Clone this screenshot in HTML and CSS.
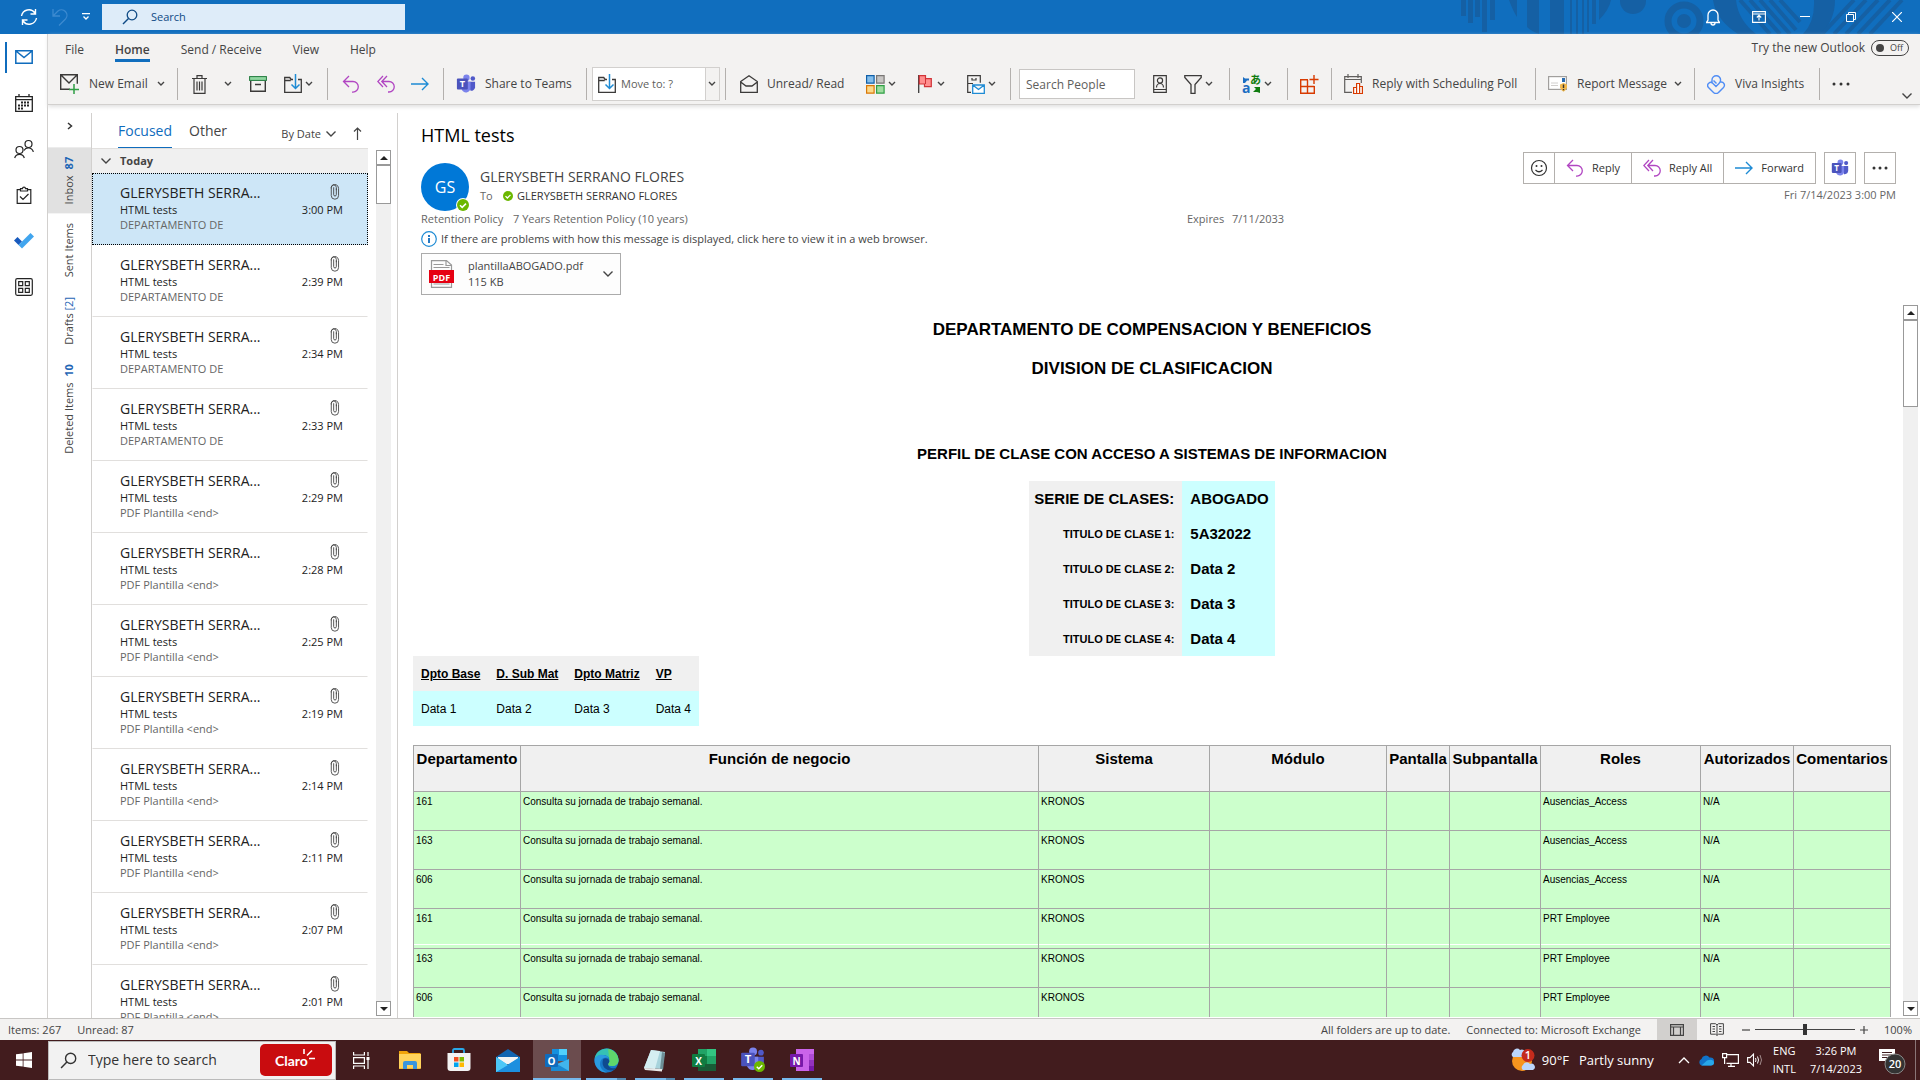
FILE: index.html
```html
<!DOCTYPE html>
<html lang="en">
<head>
<meta charset="utf-8">
<title>Inbox - Outlook</title>
<link rel="stylesheet" href="styles.css">
</head>
<body>
<svg class="defs" aria-hidden="true">
  <symbol id="chev" viewBox="0 0 8 6"><path d="M1 1l3 3 3-3" fill="none" stroke="#444" stroke-width="1.4"/></symbol>
  <symbol id="chev-lg" viewBox="0 0 12 8"><path d="M1.5 1.5L6 6l4.500-4.500" fill="none" stroke="#444" stroke-width="1.400"/></symbol>
  <symbol id="clip" viewBox="0 0 10 18"><path d="M6.500 5v7a1.500 1.500 0 0 1-3 0V4a1.500 1.500 0 0 1 .2-.5M.8 5V4a3.800 3.800 0 0 1 5.700-3Q9 2 9 5v8a4 4 0 0 1-8.200 0V4a2.800 2.800 0 0 1 5.700 0v3" fill="none" stroke="#444" stroke-width="1"/></symbol>
  <symbol id="reply" viewBox="0 0 18 18"><path d="M7 1L1.500 6.500 7 12M1.500 6.500H11a5.300 5.300 0 0 1 0 10.600H10" fill="none" stroke="#b146c2" stroke-width="1.300"/></symbol>
  <symbol id="reply-all" viewBox="0 0 18 18"><path d="M6 1L.8 6.500 6 12M10 1L4.800 6.500 10 12M4.800 6.500H12a5 5 0 0 1 0 10.500h-1" fill="none" stroke="#b146c2" stroke-width="1.300"/></symbol>
  <symbol id="forward" viewBox="0 0 18 18"><path d="M0 9h17M11 3l6 6-6 6" fill="none" stroke="#1e8bd4" stroke-width="1.400"/></symbol>
  <symbol id="folder-move" viewBox="0 0 18 20"><path d="M8 18.300H.7V3.500h5l1.500 2H9M14 5.500h3.300v12.800H8M.7 6.500h6" fill="none" stroke="#3b3a39" stroke-width="1.300"/><path d="M11.500 0v14.500M7.500 10.500l4 4 4-4" fill="none" stroke="#1e8bd4" stroke-width="1.500"/></symbol>
  <symbol id="lens" viewBox="0 0 16 16"><path d="M1 15l5.500-5.500" fill="none" stroke="currentColor" stroke-width="1.400"/><circle cx="10" cy="6" r="4.800" fill="none" stroke="currentColor" stroke-width="1.300"/></symbol>
  <symbol id="teams" viewBox="0 0 22 22"><circle cx="11.500" cy="4" r="3.500" fill="#7b83eb"/><circle cx="18.500" cy="5" r="2.500" fill="#5059c9"/><path d="M13 8.500h8v6a4.500 4.500 0 0 1-5 4z" fill="#5059c9"/><path d="M6 8.500h10v6a5 5 0 0 1-10 1.500z" fill="#7b83eb"/><rect x="1" y="5" width="12" height="12" rx="1" fill="#4b53bc"/><text x="7" y="14.500" text-anchor="middle" class="glyph">T</text></symbol>
  <symbol id="ok" viewBox="0 0 12 12"><circle cx="6" cy="6" r="6" fill="#6bb700"/><path d="M3 6.200l2.200 2.200L9 4.600" fill="none" stroke="#fff" stroke-width="1.500"/></symbol>
</svg>

<header class="titlebar">
  <svg class="art" viewBox="0 0 460 34" width="460" height="34" aria-hidden="true">
    <g fill="#1560a4"><path d="M1 0h5v16H1zM8 0h5v23H8zM15 0h5v17h-5zM22 0h5v32h-5zM30 0h5v20h-5zM49 0h8v17q-4-6-8-17zM67 0h12v34q-8-3-12-7zM90 0h14v34H90zM110 0h2v34h-2zM116 0h2v34h-2zM122 0h2v34h-2zM127 0h2v32h-2zM132 0h4v24h-4zM139 0h12q-2 10-12 20z"/><circle cx="173" cy="1" r="13"/>
    <path d="M253 0h23q2 20 20 34h-18q-22-14-25-34zM354 0h21q0 20-14 34h-18q12-12 11-34z"/></g>
    <circle cx="224" cy="21" r="16" fill="none" stroke="#1560a4" stroke-width="7"/><circle cx="224" cy="21" r="7" fill="#1560a4"/>
    <path d="M280 0l30 34M290 0l30 34M300 0l30 34M310 0l26 30M320 0l20 22M362 34l32-34M374 34l32-34M386 34l32-34M398 34l32-34M410 34l32-34" stroke="#1560a4" stroke-width="4"/>
  </svg>
  <div class="quick">
    <button aria-label="Send and receive"><svg width="18" height="18" viewBox="0 0 18 18"><path d="M1.500 8A7.500 7.500 0 0 1 15 5M16.500 10A7.500 7.500 0 0 1 3 13M15.500 1v5h-5M2.500 17v-5h5" fill="none" stroke="#fff" stroke-width="1.400"/></svg></button>
    <button aria-label="Undo"><svg width="16" height="18" viewBox="0 0 16 18"><path d="M1 1v7h7M1 8l5-5a5.500 5.500 0 0 1 7.500 8L7 17.500" fill="none" stroke="#3c8ad0" stroke-width="1.300"/></svg></button>
    <button aria-label="Customize toolbar"><svg width="8" height="8" viewBox="0 0 8 8"><path d="M0 .7h8M1.500 3.500L4 6l2.500-2.500" fill="none" stroke="#fff" stroke-width="1.300"/></svg></button>
  </div>
  <label class="searchbox"><svg width="16" height="16"><use href="#lens"/></svg><input type="text" placeholder="Search" aria-label="Search"></label>
  <div class="winctl">
    <button aria-label="Notifications"><svg width="14" height="18" viewBox="0 0 14 18"><path d="M.5 14.500h13L12 12V7A5 5 0 0 0 2 7v5zM5 15a2 2 0 0 0 4 0" fill="none" stroke="#fff" stroke-width="1.300"/></svg></button>
    <button aria-label="Ribbon display"><svg width="14" height="12" viewBox="0 0 14 12"><path d="M.6.600h12.800v10.800H.6zM.6 3h12.800M7 9.500v-5M4.800 6.500L7 4.300l2.200 2.200" fill="none" stroke="#fff" stroke-width="1.100"/></svg></button>
    <button aria-label="Minimize"><svg width="10" height="10" viewBox="0 0 10 10"><path d="M0 4.500h10" stroke="#fff"/></svg></button>
    <button aria-label="Restore"><svg width="10" height="10" viewBox="0 0 10 10"><path d="M.5 2.500h7v7h-7zM2.500 2V.5h7v7H8" fill="none" stroke="#fff"/></svg></button>
    <button aria-label="Close"><svg width="10" height="10" viewBox="0 0 10 10"><path d="M0 0l10 10M10 0L0 10" stroke="#fff" stroke-width="1.200"/></svg></button>
  </div>
</header>

<div class="app">
  <nav class="rail" aria-label="Apps">
    <a href="#" class="on" aria-label="Mail"><svg width="18" height="14" viewBox="0 0 18 14"><path d="M.8.800h16.400v12.400H.8zM1 1l8 6.500L17 1" fill="none" stroke="#0f6cbd" stroke-width="1.500"/></svg></a>
    <a href="#" aria-label="Calendar"><svg width="18" height="18" viewBox="0 0 18 18"><path d="M.7 2.700h16.600v14.600H.7zM.7 5.700h16.600M4 0v3M14 0v3" fill="none" stroke="#242424" stroke-width="1.300"/><path d="M6 8.500h9M3 11.500h12M3 14.500h6" stroke="#242424" stroke-width="2" stroke-dasharray="2 1"/></svg></a>
    <a href="#" aria-label="People"><svg width="20" height="20" viewBox="0 0 20 20"><g fill="none" stroke="#242424" stroke-width="1.200"><circle cx="14.500" cy="5" r="3.500"/><circle cx="5.500" cy="11" r="3.500"/><path d="M.7 19a5 5 0 0 1 9.600 0M10 11.500a5 5 0 0 1 9.300 1.500"/></g></svg></a>
    <a href="#" aria-label="Tasks"><svg width="16" height="18" viewBox="0 0 16 18"><path d="M4 3.700H1.200v13.600h13.600V3.700H12M4.500 5V2.700h2a1.500 1.500 0 0 1 3 0h2V5zM4 10.500l3 3 5.500-5.500" fill="none" stroke="#242424" stroke-width="1.200"/></svg></a>
    <a href="#" aria-label="To Do"><svg width="20" height="16" viewBox="0 0 20 16"><path d="M0 7.500l3.500-3.500 4.500 4.500-3.500 3.500z" fill="#185abd"/><path d="M4.500 12L16.500 0 20 3.500 8 15.500z" fill="#41a5ee"/></svg></a>
    <a href="#" aria-label="More apps"><svg width="18" height="18" viewBox="0 0 18 18"><g fill="none" stroke="#242424" stroke-width="1.200"><rect x=".7" y=".7" width="16.600" height="16.600" rx="1.500"/><path d="M3.700 3.700h4v4h-4zM10.300 3.700h4v4h-4zM3.700 10.300h4v4h-4zM10.300 10.300h4v4h-4z"/></g></svg></a>
  </nav>

  <div class="workspace">
    <div class="ribbon">
      <div class="tabs">
        <a href="#">File</a><a href="#" class="on">Home</a><a href="#">Send / Receive</a><a href="#">View</a><a href="#">Help</a>
        <span class="try"><label for="newol">Try the new Outlook</label><span class="toggle"><input type="checkbox" id="newol">Off</span></span>
      </div>
      <div class="commands">
        <div class="grp"><button><svg width="20" height="21" viewBox="0 0 20 21"><path d="M10 15.300H.7V.7h16.600v9M1 1l8 8 8-8" fill="none" stroke="#3b3a39" stroke-width="1.400"/><path d="M14 10v10M9 15.500h10" stroke="#2f9e44" stroke-width="1.500"/></svg>New Email</button><button aria-label="More"><svg width="8" height="6"><use href="#chev"/></svg></button></div>
        <div class="grp icons"><button aria-label="Delete"><svg width="15" height="19" viewBox="0 0 15 19"><path d="M0 3.500h15M2 3.500v14.800h11V3.500M5 3V.7h5V3M5 6.500v9M7.500 6.500v9M10 6.500v9" fill="none" stroke="#3b3a39" stroke-width="1.200"/></svg></button><button aria-label="More"><svg width="8" height="6"><use href="#chev"/></svg></button>
          <button aria-label="Archive"><svg width="18" height="16" viewBox="0 0 18 16"><path d="M1.700 5v10.300h14.600V5M6 8.500h6" fill="none" stroke="#3b3a39" stroke-width="1.400"/><rect x=".6" y=".6" width="16.800" height="3.800" fill="#8fd6a0" stroke="#217a3c"/></svg></button>
          <button class="tight" aria-label="Move"><svg width="18" height="20"><use href="#folder-move"/></svg><svg width="8" height="6"><use href="#chev"/></svg></button></div>
        <div class="grp icons"><button aria-label="Reply"><svg width="18" height="18"><use href="#reply"/></svg></button><button aria-label="Reply all"><svg width="18" height="18"><use href="#reply-all"/></svg></button><button aria-label="Forward"><svg width="18" height="18"><use href="#forward"/></svg></button></div>
        <div class="grp"><button><svg width="20" height="20"><use href="#teams"/></svg>Share to Teams</button></div>
        <div class="grp snug"><div class="combo"><svg width="18" height="20"><use href="#folder-move"/></svg><select aria-label="Quick steps"><option>Move to: ?</option></select><span class="drop"><svg width="8" height="6"><use href="#chev"/></svg></span></div></div>
        <div class="grp icons"><button><svg width="18" height="18" viewBox="0 0 18 18"><path d="M.7 6.500L9 .8l8.300 5.700v10.800H.7zM.7 7L6 11h6l5.300-4" fill="none" stroke="#3b3a39" stroke-width="1.300"/></svg>Unread/ Read</button>
          <button class="tight" aria-label="Categorize"><svg width="19" height="19" viewBox="0 0 19 19"><g stroke-width="1.200"><path d="M.6.600h7.500v7.500H.6z" fill="#83beec" stroke="#0f5fa8"/><path d="M10.600.6h7.500v7.500h-7.500z" fill="#c8c6c4" stroke="#797775"/><path d="M.6 10.600h7.500v7.500H.6z" fill="#fbd98a" stroke="#d97706"/><path d="M10.600 10.600h7.500v7.500h-7.500z" fill="#9fdc9f" stroke="#2f9e44"/></g></svg><svg width="8" height="6"><use href="#chev"/></svg></button>
          <button class="wide" aria-label="Follow up"><svg width="14" height="18" viewBox="0 0 14 18"><path d="M.7 0v18" stroke="#3b3a39" stroke-width="1.300"/><path d="M1.300.7H7.500v3h5.800v8H6.500V9H1.300z" fill="#ff8f8f" stroke="#d13438" stroke-width="1.200"/><path d="M7.500 3.500V9" stroke="#d13438"/></svg><svg width="8" height="6"><use href="#chev"/></svg></button>
          <button class="tight" aria-label="Rules"><svg width="18" height="19" viewBox="0 0 18 19"><path d="M4 17.300H.7V.7h12.600v7M.7 8.500H6M5 3v2h4V3" fill="none" stroke="#3b3a39" stroke-width="1.200"/><path d="M5.700 10h11.600v8.300H5.700zM6 10.300l5.500 4.200 5.500-4.200" fill="#fff" stroke="#1e8bd4" stroke-width="1.300"/></svg><svg width="8" height="6"><use href="#chev"/></svg></button></div>
        <div class="grp people"><input type="text" placeholder="Search People" aria-label="Search People"><button aria-label="Address book"><svg width="14" height="18" viewBox="0 0 14 18"><path d="M.7.700h12.600v16.600H.7zM.7 14.500h12.600M3.500 12.500a3.500 4 0 0 1 7 0" fill="none" stroke="#3b3a39" stroke-width="1.200"/><circle cx="7" cy="5.500" r="2.600" fill="none" stroke="#3b3a39" stroke-width="1.200"/></svg></button>
          <button class="tight" aria-label="Filter"><svg width="18" height="19" viewBox="0 0 18 19"><path d="M.8.700h16.400v1.800L11 9.500v8.800H7V9.500L.8 2.500z" fill="none" stroke="#3b3a39" stroke-width="1.300"/></svg><svg width="8" height="6"><use href="#chev"/></svg></button></div>
        <div class="grp"><button class="tight" aria-label="Translate"><svg class="open" width="19" height="19" viewBox="0 0 19 19"><path d="M1 2l2 1.500h4v2H5L3 8 1 8z" fill="#1b6ec2"/><path d="M18 18v-6h-6l2 2-3 3h4z" fill="#107c10"/><text x="0" y="18" class="tr-a">a</text><text x="8" y="9" class="tr-b">あ</text></svg><svg width="8" height="6"><use href="#chev"/></svg></button></div>
        <div class="grp"><button aria-label="Get add-ins"><svg width="19" height="19" viewBox="0 0 19 19"><path d="M8 4.700H.7v13.600h13.600V11M7.500 5v13M.7 11.500h13.600M14 0v9M9.500 4.500h9" fill="none" stroke="#d83b01" stroke-width="1.400"/></svg></button></div>
        <div class="grp"><button><svg width="19" height="20" viewBox="0 0 19 20"><path d="M8 18.300H.7V2.700h16.600V9M.7 5.500h16.600M4 0v4M14 0v4" fill="none" stroke="#605e5c" stroke-width="1.200"/><path d="M9.600 13.500h3v6h-3zM12.600 9.500h3v10h-3zM15.600 12.500h2.800v7h-2.800z" fill="#fff" stroke="#d83b01" stroke-width="1.200"/></svg>Reply with Scheduling Poll</button></div>
        <div class="grp"><button><svg width="20" height="16" viewBox="0 0 20 16"><rect x=".6" y=".6" width="17.800" height="12.800" fill="#fff" stroke="#a19f9d" stroke-width="1.200"/><path d="M3 7h7M3 9.500h7" stroke="#d2d0ce"/><path d="M14 2h3v4h-3z" fill="#2b6cb0"/><path d="M12 8.500l3.500-1.500 3.500 1.500v3q-1 3-3.500 4.200Q13 14.500 12 11.500z" fill="#f2b84b"/><path d="M15.500 8.500v3.500M15.500 13v1.200" stroke="#333" stroke-width="1.400"/></svg>Report Message</button><svg width="8" height="6"><use href="#chev"/></svg></div>
        <div class="grp"><button><svg width="19" height="19" viewBox="0 0 19 19"><g fill="none" stroke="#4f8df5" stroke-width="1.400"><path d="M5 8.500V5a4.300 4.300 0 0 1 8.600 0c0 1.600-.6 2.500-1.600 3.500L9 11.500 6 8.500A3 3 0 0 0 1.500 12.500L6.500 17.500a3.500 3.500 0 0 0 5 0l5-5a3.300 3.300 0 0 0-3-5.500"/><path d="M6.500 5.500l3 3"/></g></svg>Viva Insights</button></div>
        <div class="grp last"><button aria-label="More commands"><svg width="18" height="4" viewBox="0 0 18 4"><path d="M2 2h.01M9 2h.01M16 2h.01" stroke="#333" stroke-width="3" stroke-linecap="round"/></svg></button><button class="collapse" aria-label="Collapse ribbon"><svg width="12" height="8"><use href="#chev-lg"/></svg></button></div>
      </div>
    </div>

    <div class="panes">
      <nav class="folders" aria-label="Folders">
        <button class="expand" aria-label="Expand folders"><svg width="6" height="8" viewBox="0 0 6 8"><path d="M1 1l3.500 3L1 7" fill="none" stroke="#333" stroke-width="1.500"/></svg></button>
        <a href="#" class="on">Inbox <b>87</b></a><a href="#">Sent Items</a><a href="#">Drafts <i>[2]</i></a><a href="#">Deleted Items <b>10</b></a>
      </nav>

      <section class="list">
        <div class="listhead"><a href="#" class="on">Focused</a><a href="#">Other</a><button class="sort">By Date <svg width="12" height="8"><use href="#chev-lg"/></svg></button><button aria-label="Reverse order"><svg width="9" height="13" viewBox="0 0 9 13"><path d="M4.500 13V1M1 4.500L4.500 1 8 4.500" fill="none" stroke="#444" stroke-width="1.200"/></svg></button></div>
        <div class="listbody">
          <div class="mails">
            <div class="day"><svg width="12" height="8"><use href="#chev-lg"/></svg>Today</div>
            <article class="mail sel"><h3>GLERYSBETH SERRA...</h3><svg class="clip"><use href="#clip"/></svg><p>HTML tests</p><time>3:00 PM</time><small>DEPARTAMENTO DE</small></article>
            <article class="mail"><h3>GLERYSBETH SERRA...</h3><svg class="clip"><use href="#clip"/></svg><p>HTML tests</p><time>2:39 PM</time><small>DEPARTAMENTO DE</small></article>
            <article class="mail"><h3>GLERYSBETH SERRA...</h3><svg class="clip"><use href="#clip"/></svg><p>HTML tests</p><time>2:34 PM</time><small>DEPARTAMENTO DE</small></article>
            <article class="mail"><h3>GLERYSBETH SERRA...</h3><svg class="clip"><use href="#clip"/></svg><p>HTML tests</p><time>2:33 PM</time><small>DEPARTAMENTO DE</small></article>
            <article class="mail"><h3>GLERYSBETH SERRA...</h3><svg class="clip"><use href="#clip"/></svg><p>HTML tests</p><time>2:29 PM</time><small>PDF Plantilla &lt;end&gt;</small></article>
            <article class="mail"><h3>GLERYSBETH SERRA...</h3><svg class="clip"><use href="#clip"/></svg><p>HTML tests</p><time>2:28 PM</time><small>PDF Plantilla &lt;end&gt;</small></article>
            <article class="mail"><h3>GLERYSBETH SERRA...</h3><svg class="clip"><use href="#clip"/></svg><p>HTML tests</p><time>2:25 PM</time><small>PDF Plantilla &lt;end&gt;</small></article>
            <article class="mail"><h3>GLERYSBETH SERRA...</h3><svg class="clip"><use href="#clip"/></svg><p>HTML tests</p><time>2:19 PM</time><small>PDF Plantilla &lt;end&gt;</small></article>
            <article class="mail"><h3>GLERYSBETH SERRA...</h3><svg class="clip"><use href="#clip"/></svg><p>HTML tests</p><time>2:14 PM</time><small>PDF Plantilla &lt;end&gt;</small></article>
            <article class="mail"><h3>GLERYSBETH SERRA...</h3><svg class="clip"><use href="#clip"/></svg><p>HTML tests</p><time>2:11 PM</time><small>PDF Plantilla &lt;end&gt;</small></article>
            <article class="mail"><h3>GLERYSBETH SERRA...</h3><svg class="clip"><use href="#clip"/></svg><p>HTML tests</p><time>2:07 PM</time><small>PDF Plantilla &lt;end&gt;</small></article>
            <article class="mail"><h3>GLERYSBETH SERRA...</h3><svg class="clip"><use href="#clip"/></svg><p>HTML tests</p><time>2:01 PM</time><small>PDF Plantilla &lt;end&gt;</small></article>
          </div>
          <div class="scroll"><span class="arrow up"></span><span class="thumb short"></span><span class="arrow down"></span></div>
        </div>
      </section>

      <main class="reading">
        <div class="msghead">
          <h1>HTML tests</h1>
          <div class="from">
            <span class="avatar">GS<svg width="14" height="14" viewBox="-1 -1 14 14"><circle cx="6" cy="6" r="7" fill="#fff"/><use href="#ok" width="12" height="12"/></svg></span>
            <div class="who"><h2>GLERYSBETH SERRANO FLORES</h2><p><span>To</span><svg width="10" height="10"><use href="#ok"/></svg>GLERYSBETH SERRANO FLORES</p></div>
            <div class="actions">
              <div class="btns">
                <div class="joined"><button aria-label="React"><svg width="18" height="18" viewBox="0 0 18 18"><g fill="none" stroke="#333" stroke-width="1.200"><circle cx="9" cy="9" r="7.500"/><path d="M5.500 11q3.500 3.500 7 0"/></g><circle cx="6.500" cy="7" r="1" fill="#333"/><circle cx="11.500" cy="7" r="1" fill="#333"/></svg></button><button><svg width="18" height="18"><use href="#reply"/></svg>Reply</button><button><svg width="18" height="18"><use href="#reply-all"/></svg>Reply All</button><button><svg width="18" height="18"><use href="#forward"/></svg>Forward</button></div>
                <button class="solo" aria-label="Share to Teams"><svg width="18" height="18"><use href="#teams"/></svg></button>
                <button class="solo" aria-label="More actions"><svg width="18" height="4" viewBox="0 0 18 4"><path d="M3 2h.01M9 2h.01M15 2h.01" stroke="#333" stroke-width="3" stroke-linecap="round"/></svg></button>
              </div>
              <time>Fri 7/14/2023 3:00 PM</time>
            </div>
          </div>
          <div class="policy"><span>Retention Policy</span><span>7 Years Retention Policy (10 years)</span><span class="exp">Expires</span><span>7/11/2033</span></div>
          <div class="info"><svg width="16" height="16" viewBox="0 0 16 16"><circle cx="8" cy="8" r="7.300" fill="#fff" stroke="#1e8bd4" stroke-width="1.200"/><path d="M8 4v2M8 7v5" stroke="#0f6cbd" stroke-width="1.800"/></svg><span>If there are problems with how this message is displayed, click here to view it in a web browser.</span></div>
          <button class="attach"><svg width="25" height="28" viewBox="0 0 25 28"><path d="M2.500.600h15L22.500 5v22.400h-20zM17 .6V5.500h5.500M4.500 4.500h10M4.500 7.500h16M4.500 24h16" fill="none" stroke="#999" stroke-width="1.200"/><rect y="10" width="25" height="13" fill="#e60012"/><text x="12.500" y="20.500" text-anchor="middle" class="pdf">PDF</text></svg><span>plantillaABOGADO.pdf<em>115 KB</em></span><svg width="12" height="8"><use href="#chev-lg"/></svg></button>
        </div>
        <div class="msgbody">
          <div class="doc">
            <h4>DEPARTAMENTO DE COMPENSACION Y BENEFICIOS</h4>
            <h4>DIVISION DE CLASIFICACION</h4>
            <h5>PERFIL DE CLASE CON ACCESO A SISTEMAS DE INFORMACION</h5>
            <table class="clases">
              <tr class="lead"><th>SERIE DE CLASES:</th><td>ABOGADO</td></tr>
              <tr><th>TITULO DE CLASE 1:</th><td>5A32022</td></tr>
              <tr><th>TITULO DE CLASE 2:</th><td>Data 2</td></tr>
              <tr><th>TITULO DE CLASE 3:</th><td>Data 3</td></tr>
              <tr><th>TITULO DE CLASE 4:</th><td>Data 4</td></tr>
            </table>
            <table class="dptos">
              <tr><th>Dpto Base</th><th>D. Sub Mat</th><th>Dpto Matriz</th><th>VP</th></tr>
              <tr><td>Data 1</td><td>Data 2</td><td>Data 3</td><td>Data 4</td></tr>
            </table>
            <table class="accesos">
              <colgroup><col class="c-dep"><col><col class="c-sis"><col class="c-mod"><col class="c-pan"><col class="c-sub"><col class="c-rol"><col class="c-aut"><col class="c-com"></colgroup>
              <tr><th>Departamento</th><th>Función de negocio</th><th>Sistema</th><th>Módulo</th><th>Pantalla</th><th>Subpantalla</th><th>Roles</th><th>Autorizados</th><th>Comentarios</th></tr>
              <tr><td>161</td><td>Consulta su jornada de trabajo semanal.</td><td>KRONOS</td><td></td><td></td><td></td><td>Ausencias_Access</td><td>N/A</td><td></td></tr>
              <tr><td>163</td><td>Consulta su jornada de trabajo semanal.</td><td>KRONOS</td><td></td><td></td><td></td><td>Ausencias_Access</td><td>N/A</td><td></td></tr>
              <tr><td>606</td><td>Consulta su jornada de trabajo semanal.</td><td>KRONOS</td><td></td><td></td><td></td><td>Ausencias_Access</td><td>N/A</td><td></td></tr>
              <tr class="page-end"><td>161</td><td>Consulta su jornada de trabajo semanal.</td><td>KRONOS</td><td></td><td></td><td></td><td>PRT Employee</td><td>N/A</td><td></td></tr>
              <tr><td>163</td><td>Consulta su jornada de trabajo semanal.</td><td>KRONOS</td><td></td><td></td><td></td><td>PRT Employee</td><td>N/A</td><td></td></tr>
              <tr><td>606</td><td>Consulta su jornada de trabajo semanal.</td><td>KRONOS</td><td></td><td></td><td></td><td>PRT Employee</td><td>N/A</td><td></td></tr>
            </table>
          </div>
          <div class="scroll"><span class="arrow up"></span><span class="thumb long"></span><span class="arrow down"></span></div>
        </div>
      </main>
    </div>
  </div>
</div>

<footer class="status">
  <span>Items: 267</span><span>Unread: 87</span>
  <span class="push">All folders are up to date.</span><span>Connected to: Microsoft Exchange</span>
  <div class="views"><button class="on" aria-label="Normal view"><svg width="14" height="12" viewBox="0 0 14 12"><path d="M.6.600h12.800v10.800H.6zM.6 3h12.800M3.500 3v8.500M10.500 3v8.500" fill="none" stroke="#444" stroke-width="1.200"/></svg></button><button aria-label="Reading view"><svg width="14" height="13" viewBox="0 0 14 13"><path d="M7 2L5.500.7H.6v10.500h4.900L7 12.500l1.500-1.300h4.900V.7H8.500zM7 2v10M2.500 3.500h2.500M2.500 6h2.500M2.500 8.500h2.500M9 3.500h2.500M9 6h2.500M9 8.500h2.500" fill="none" stroke="#444"/></svg></button>
    <div class="zoom"><button aria-label="Zoom out"><svg width="8" height="8" viewBox="0 0 8 8"><path d="M0 4h8" stroke="#444" stroke-width="1.200"/></svg></button><input type="range" min="0" max="100" value="50" aria-label="Zoom"><button aria-label="Zoom in"><svg width="8" height="8" viewBox="0 0 8 8"><path d="M0 4h8M4 0v8" stroke="#444" stroke-width="1.200"/></svg></button></div></div>
  <span>100%</span>
</footer>

<footer class="taskbar">
  <button class="start" aria-label="Start"><svg width="16" height="16" viewBox="0 0 16 16"><path d="M0 2.300L6.700 1.400V7.600H0zM7.500 1.300L16 0v7.600H7.500zM0 8.400h6.700v6.200L0 13.700zM7.500 8.400H16V16l-8.500-1.300z" fill="#fff"/></svg></button>
  <div class="tsearch"><svg width="17" height="17"><use href="#lens"/></svg><input type="text" placeholder="Type here to search" aria-label="Type here to search"><span class="claro">Claro<svg width="14" height="14" viewBox="0 0 14 14"><path d="M2 5V0M5 6.500l5-5M7 9.500h6" stroke="#fff" stroke-width="1.600"/></svg></span></div>
  <div class="apps">
    <button aria-label="Task view"><svg width="17" height="17" viewBox="0 0 17 17"><path d="M.6 0v3h10.800V0M.6 17v-3h10.800v3M.6 5.600h10.800v5.800H.6zM15 0v4M15 8v9" fill="none" stroke="#fff" stroke-width="1.200"/><rect x="13.500" y="5" width="3" height="3" fill="#fff"/></svg></button>
    <button aria-label="File Explorer"><svg width="22" height="20" viewBox="0 0 22 20"><path d="M0 1h8l2 2h11.500V19H0z" fill="#f0a30a"/><path d="M0 4h22v14.500H0z" fill="#ffd35c"/><path d="M4 19v-6q0-2 2-2h10q2 0 2 2v6h-4v-4H8v4z" fill="#3a96dd"/></svg></button>
    <button aria-label="Microsoft Store"><svg width="24" height="24" viewBox="0 0 24 24"><path d="M6 6V2.500Q6 1 7.500 1h8Q17 1 17 2.500V6" fill="none" stroke="#2aa8e8" stroke-width="1.800"/><path d="M.5 5h23v15q0 3-3 3h-17q-3 0-3-3z" fill="#f3f3f3"/><path d="M7 9h4.500v4.500H7z" fill="#f25022"/><path d="M12.500 9H17v4.500h-4.500z" fill="#7fba00"/><path d="M7 14.500h4.500V19H7z" fill="#00a4ef"/><path d="M12.500 14.500H17V19h-4.500z" fill="#ffb900"/></svg></button>
    <button aria-label="Mail"><svg width="24" height="23" viewBox="0 0 24 23"><path d="M0 8l12-8 12 8v4H0z" fill="#1264b0"/><path d="M2 8h20v7H2z" fill="#f3f3f3"/><path d="M0 8l12 8 12-8v15H0z" fill="#35b5f0"/><path d="M24 8v15H0z" fill="#1c8fdf"/><path d="M0 8l12 8L0 23z" fill="#4cc7f7"/></svg></button>
    <button class="run active" aria-label="Outlook"><svg width="25" height="23" viewBox="0 0 25 23"><path d="M7 0h15v12H7z" fill="#1490df"/><path d="M14 0h8v6h-8z" fill="#50d0fc"/><path d="M6 11l9 5 9-6v12H6z" fill="#1a8ad4"/><path d="M24 10v12L12 15z" fill="#41b5ee"/><rect y="5" width="13" height="13" rx="1" fill="#0f6cbd"/><text x="6.500" y="15.500" text-anchor="middle" class="glyph">O</text></svg></button>
    <button class="run multi" aria-label="Edge"><svg width="25" height="25" viewBox="0 0 25 25"><circle cx="12.500" cy="12.500" r="12" fill="#1778c8"/><path d="M.6 11A12 12 0 0 1 24.500 12c0 4-3 6-6.500 6-3 0-4-1-4-2 0-.8 1.500-1.500 1.500-4 0-3-3-5-6.500-5-4 0-7 1.500-8.400 4z" fill="#35c1b5"/><path d="M14 1a12 12 0 0 1 10.500 11c0 4-3 6-6.500 6-3 0-4-1-4-2 0-.8 1.500-1.500 1.500-4z" fill="#5fd66b"/><path d="M.6 11C3 7 6 6.500 9 7c4 .5 6.500 3 6.500 5q0-2.500-3.500-2.500c-4 0-6 3-6 6.500 0 4 3 7 7 8.400A12 12 0 0 1 .6 11z" fill="#2a9be0"/><path d="M9 11.500c-2 7 3 11 8 11q3 0 6-3c-5 2-9 0-9-3.500q1-1 1.500-3-1-3-4-2.800-1.500 0-2.500 1.300z" fill="#0f4a90"/></svg></button>
    <button class="run multi" aria-label="Notepad"><svg width="24" height="23" viewBox="0 0 24 23"><path d="M8 1l14 2-3 17L1 19z" fill="#a7d3dc"/><path d="M8 1l9 1-5 18L1 19z" fill="#d5eef2"/><path d="M19 3l3 1-2 17-3-1z" fill="#6d8f97"/><path d="M1 19l18 1v2.500L2 21z" fill="#e8e8e8"/></svg></button>
    <button class="run" aria-label="Excel"><svg width="25" height="23" viewBox="0 0 25 23"><path d="M6 0h18v22H6z" fill="#21a366"/><path d="M15 0h9v7h-9z" fill="#33c481"/><path d="M6 7h9v8H6z" fill="#107c41"/><path d="M6 15h18v7H6z" fill="#185c37"/><rect y="5" width="13" height="13" rx="1" fill="#107c41"/><text x="6.500" y="15.500" text-anchor="middle" class="glyph">X</text></svg></button>
    <button class="run" aria-label="Teams"><svg width="26" height="26" viewBox="0 0 26 26"><use href="#teams" width="25" height="25"/><use href="#ok" x="14" y="14" width="11" height="11"/></svg></button>
    <button class="run" aria-label="OneNote"><svg width="25" height="23" viewBox="0 0 25 23"><path d="M6 0h18v22H6z" fill="#ca64ea"/><path d="M19 5h5v6h-5z" fill="#ae4bd5"/><path d="M19 11h5v6h-5z" fill="#9332bf"/><path d="M19 17h5v5h-5z" fill="#7719aa"/><rect y="5" width="13" height="13" rx="1" fill="#7719aa"/><text x="6.500" y="15.500" text-anchor="middle" class="glyph">N</text></svg></button>
  </div>
  <button class="weather"><svg width="25" height="24" viewBox="0 0 25 24"><circle cx="12" cy="13" r="10" fill="#f7941e"/><path d="M3 9a3 3 0 0 1 0-5 4 4 0 0 1 7-2 3.500 3.500 0 0 1 3 7zM13 22a3 3 0 0 1 0-5 4 4 0 0 1 7-1 3 3 0 0 1 3 6z" fill="#bcd6fb"/><circle cx="18" cy="7.500" r="6.500" fill="#c42b1c"/><text x="18" y="11" text-anchor="middle" class="count">1</text></svg>90°F<span>Partly sunny</span></button>
  <div class="tray">
    <svg width="12" height="8" viewBox="0 0 12 8"><path d="M1 7l5-5 5 5" fill="none" stroke="#fff" stroke-width="1.300"/></svg>
    <svg width="16" height="11" viewBox="0 0 16 11"><path d="M3.500 10.500a3.500 3.500 0 0 1 0-6.500 4.500 4.500 0 0 1 8-1.500 4 4 0 0 1 1.500 8z" fill="#1173c9"/><path d="M3.500 10.500L9 5.500q6-2 7 2 0 3-3 3z" fill="#28a8ea"/></svg>
    <svg width="17" height="14" viewBox="0 0 17 14"><path d="M4.500 1.600h11.900v8.800H4.500M9 10.500v3M6 13.400h7M.6.600h4v4h-4zM2.600 4.600V11" fill="none" stroke="#fff" stroke-width="1.200"/></svg>
    <svg width="16" height="14" viewBox="0 0 16 14"><path d="M.6 4.600H3l3.500-3.500v11.800L3 9.400H.6z" fill="none" stroke="#fff" stroke-width="1.100"/><path d="M8.500 5q1 2 0 4M10.500 3.500q2 3.500 0 7" fill="none" stroke="#fff"/><path d="M13 2q3 5 0 10" fill="none" stroke="#a08a8a"/></svg>
  </div>
  <div class="clock">ENG<br>INTL</div>
  <div class="clock">3:26 PM<br>7/14/2023</div>
  <button class="notes" aria-label="Notifications"><svg width="32" height="28" viewBox="0 0 32 28"><path d="M1 3h16v12h-4l-3 3v-3H1z" fill="#fff"/><path d="M4 6.500h10M4 9h10M4 11.500h7" stroke="#3f1c1e"/><circle cx="17" cy="18" r="10" fill="#333" stroke="#888"/><text x="17" y="22" text-anchor="middle" class="count">20</text></svg></button>
</footer>
</body>
</html>
```
FILE: styles.css
```css
* { box-sizing: border-box; }
body {
  margin: 0;
  height: 100vh;
  display: flex;
  flex-direction: column;
  overflow: hidden;
  background: #fff;
  color: #444;
  font: 12px/16px "Open Sans", "Noto Sans", sans-serif;
}
h1, h2, h3, h4, h5, p { margin: 0; font-weight: 400; }
a { color: inherit; text-decoration: none; }
svg { flex: none; display: block; }
button, input, select {
  font: inherit;
  color: inherit;
  background: none;
  border: 0;
  padding: 0;
  border-radius: 0;
  outline: 0;
}
button { display: flex; align-items: center; }
.defs { display: none; }
.open { overflow: visible; }
.glyph { font: 700 10px "Open Sans", sans-serif; fill: #fff; }
.tr-a { font: 700 14px "Open Sans", sans-serif; fill: #1b6ec2; }
.tr-b { font: 700 11px "Noto Sans CJK JP", sans-serif; fill: #107c10; }

/* Title bar */
.titlebar {
  position: relative;
  flex: none;
  height: 34px;
  display: flex;
  align-items: center;
  background: #106ebe;
}
.art { position: absolute; right: 0; top: 0; }
.quick { width: 102px; display: flex; align-items: center; justify-content: space-between; padding: 0 12px 0 20px; }
.searchbox {
  display: flex;
  align-items: center;
  gap: 13px;
  width: 303px;
  height: 26px;
  padding-left: 20px;
  background: #deecf9;
  color: #0f4a85;
  font-size: 11px;
}
.searchbox input { flex: 1; min-width: 0; }
::placeholder { color: inherit; opacity: 1; }
.winctl { position: relative; margin-left: auto; display: flex; }
.winctl button { width: 46px; height: 34px; justify-content: center; }

/* App rail */
.app { flex: 1; min-height: 0; display: flex; }
.rail { flex: none; width: 48px; border-right: 1px solid #d2d0ce; display: flex; flex-direction: column; }
.rail a { height: 46px; display: flex; align-items: center; justify-content: center; }
.rail .on { background: linear-gradient(#0f6cbd, #0f6cbd) 5px center / 2px 31px no-repeat; }

/* Ribbon */
.workspace { flex: 1; min-width: 0; display: flex; flex-direction: column; }
.ribbon { position: relative; flex: none; height: 71px; background: #f3f2f1; border-bottom: 1px solid #d2d0ce; box-shadow: 0 2px 4px #e1e1e1; }
.tabs { display: flex; gap: 31px; height: 32px; padding: 4px 11px 0 17px; }
.tabs > a { padding-top: 4px; height: 24px; }
.tabs .on { font-weight: 600; border-bottom: 3px solid #106ebe; }
.try { margin-left: auto; display: flex; align-items: center; gap: 6px; height: 20px; }
.toggle { display: flex; align-items: center; gap: 6px; width: 38px; height: 16px; padding-left: 4px; border: 1px solid #444; border-radius: 8px; font-size: 9px; }
.toggle input { appearance: none; width: 8px; height: 8px; margin: 0; border-radius: 50%; background: #444; }
.commands {
  display: grid;
  grid-template-columns: 130px 150px 116px 143px 139px 285px 219px 58px 44px 204px 159px 125px 1fr;
  height: 36px;
  align-items: center;
}
.grp { display: flex; align-items: center; justify-content: space-between; height: 32px; padding: 0 12px; border-right: 1px solid #b3b0ad; }
.grp button { gap: 9px; white-space: nowrap; }
.grp .tight { gap: 3px; }
.grp .wide { gap: 5px; }
.icons { padding: 0 14px; }
.snug { padding: 0 5px; }
.people { padding: 0 16px 0 8px; }
.people input { width: 116px; height: 30px; padding-left: 6px; background: #fff; border: 1px solid #c8c6c4; font-size: 12px; color: #605e5c; }
.combo { flex: 1; display: flex; align-items: center; height: 34px; padding-left: 5px; background: #fff; border: 1px solid #d2d0ce; color: #605e5c; font-size: 11px; }
.combo select { flex: 1; min-width: 0; appearance: none; padding-left: 5px; }
.drop { display: flex; align-items: center; width: 14px; height: 32px; padding-left: 2px; border-left: 1px solid #d2d0ce; background: #f3f2f1; }
.last { border: 0; padding-right: 7px; }
.collapse { align-self: flex-end; }

/* Folder strip */
.panes { flex: 1; min-height: 0; display: flex; padding-top: 8px; }
.folders { flex: none; width: 44px; display: flex; flex-direction: column; align-items: stretch; border-right: 1px solid #d2d0ce; font-size: 11px; }
.expand { height: 34px; padding-bottom: 9px; justify-content: center; }
.folders a { writing-mode: vertical-rl; transform: rotate(180deg); padding: 9px 0 10px; line-height: 42px; white-space: nowrap; }
.folders b, .folders i { font-style: normal; color: #1f66b5; }
.folders b { margin-top: 3px; }
.folders .on { background: #e1e1e1; }

/* Message list */
.list { flex: none; width: 306px; display: flex; flex-direction: column; border-right: 1px solid #d2d0ce; }
.listhead { flex: none; height: 35px; display: flex; align-items: center; padding: 0 35px 0 26px; font-size: 14px; }
.listhead a { height: 35px; padding: 10px 0 0; margin-right: 17px; }
.listhead .on { color: #0f6cbd; border-bottom: 1px solid #0f6cbd; }
.listhead button { padding-top: 6px; font-size: 11px; }
.sort { margin-left: auto; margin-right: 16px; gap: 4px; }
.listbody { flex: 1; min-height: 0; display: flex; gap: 8px; padding-right: 6px; }
.mails { flex: 1; overflow: hidden; border-top: 1px solid #e1dfdd; }
.day { display: flex; align-items: center; gap: 8px; height: 24px; padding-left: 8px; background: #f0f0f0; font-size: 11px; font-weight: 700; }
.mail {
  display: grid;
  grid-template-columns: 1fr auto;
  grid-template-rows: 18px 15px 15px;
  align-items: center;
  height: 72px;
  padding: 10px 24px 0 27px;
  border: 1px solid transparent;
  border-bottom-color: #e1dfdd;
  color: #222;
  font-size: 11px;
  line-height: 15px;
}
.mail h3 { font-size: 14px; line-height: 18px; }
.mail small { font-size: 11px; color: #666; }
.clip { width: 10px; height: 16px; justify-self: end; align-self: start; margin-right: 3px; }
.mail.sel { background: #cde6f7; border: 1px dotted #000; }

/* Scroll bars */
.scroll { flex: none; width: 15px; display: flex; flex-direction: column; margin: 2px 0; background: #f0f0f0; }
.arrow { display: flex; align-items: center; justify-content: center; height: 15px; border: 1px solid #999; background: #fff; }
.arrow::after { content: ""; border: 4px solid transparent; border-top-width: 0; border-bottom-color: #222; }
.down { margin-top: auto; }
.down::after { border-width: 4px 4px 0; border-color: #222 transparent; }
.thumb { border: 1px solid #999; background: #fff; }
.short { height: 39px; }
.long { height: 87px; }

/* Message header */
.reading { flex: 1; min-width: 0; display: flex; flex-direction: column; }
.msghead { flex: none; padding: 9px 24px 0 23px; font-size: 11px; }
h1 { font-size: 18px; line-height: 26px; color: #000; }
.from { display: flex; gap: 11px; padding-top: 15px; height: 61px; }
.avatar { position: relative; flex: none; width: 48px; height: 48px; border-radius: 50%; background: #0078d7; color: #fff; font-size: 16px; line-height: 48px; text-align: center; }
.avatar svg { position: absolute; right: -1px; bottom: -1px; }
.who { padding-top: 3px; }
.who h2 { font-size: 14px; line-height: 22px; }
.who p { display: flex; align-items: center; gap: 4px; color: #333; }
.who span { width: 19px; color: #666; }
.actions { margin-left: auto; margin-top: -11px; text-align: right; color: #666; }
.btns { display: flex; gap: 8px; margin-bottom: 3px; color: #333; }
.joined { display: flex; border: 1px solid #b3b0ad; }
.joined button { height: 30px; padding: 0 11px; gap: 8px; }
.joined button:first-child { padding: 0 6px; }
.joined button + button { border-left: 1px solid #b3b0ad; }
.solo { width: 32px; height: 32px; justify-content: center; border: 1px solid #b3b0ad; }
.policy { display: grid; grid-template-columns: 92px 674px 45px 1fr; color: #666; line-height: 20px; }
.info { display: flex; align-items: center; gap: 4px; height: 20px; }
.attach { width: 200px; height: 42px; margin-top: 4px; padding: 0 6px 0 7px; background: #fdfdfd; border: 1px solid #ababab; text-align: left; }
.attach span { flex: 1; padding-left: 14px; }
.attach em { display: block; font-style: normal; }
.pdf { font: 700 9px "Open Sans", sans-serif; fill: #fff; }

/* Message content */
.msgbody { flex: 1; min-height: 0; display: flex; margin-top: 8px; padding-right: 2px; }
.doc { flex: 1; overflow: hidden; padding: 7px 12px 0 15px; margin-bottom: 1px; color: #000; font-family: "Liberation Sans", Arial, sans-serif; }
.doc h4, .doc h5 { font-weight: 700; text-align: center; }
.doc h4 { font-size: 17px; line-height: 39px; }
.doc h5 { font-size: 15px; line-height: 20px; margin: 56px 0 17px; }
.doc table { border-collapse: collapse; }
.clases { margin: 0 auto; font-size: 15px; font-weight: 700; }
.clases tr { height: 35px; }
.clases th { width: 153px; padding: 0 8px 0 4px; background: #f0f0f0; text-align: right; font-size: 11px; white-space: nowrap; }
.clases .lead th { font-size: 15px; }
.clases td { padding: 0 6px 0 8px; background: #cff; }
.dptos { font-size: 12px; }
.dptos tr { height: 35px; }
.dptos th, .dptos td { padding: 0 8px; text-align: left; }
.dptos th { background: #f0f0f0; text-decoration: underline; }
.dptos td { background: #cff; }
.accesos { width: 100%; table-layout: fixed; margin-top: 19px; font-size: 10px; line-height: 12px; }
.c-dep { width: 107px; }
.c-sis { width: 171px; }
.c-mod { width: 177px; }
.c-pan { width: 63px; }
.c-sub { width: 91px; }
.c-rol { width: 160px; }
.c-aut { width: 93px; }
.c-com { width: 97px; }
.accesos tr { height: 39px; }
.accesos tr:first-child { height: 46px; }
.accesos th, .accesos td { border: 1px solid #a6a6a6; vertical-align: top; text-align: left; padding: 4px 2px 0; background: #cfc; }
.accesos th { padding: 4px 0 0; background: #f0f0f0; text-align: center; font-size: 15px; line-height: 18px; }
.accesos .page-end { height: 40px; }
.accesos .page-end td { background: linear-gradient(#fff, #fff) 0 calc(100% - 3px) / 100% 1px no-repeat #cfc; }

/* Status bar */
.status { flex: none; display: flex; align-items: center; gap: 16px; height: 22px; padding: 0 8px; border-top: 1px solid #c8c6c4; background: #f3f2f1; font-size: 11px; }
.push { margin-left: auto; }
.views { display: flex; align-self: stretch; }
.views > button { width: 40px; justify-content: center; }
.views .on { background: #d2d0ce; }
.zoom { display: flex; align-items: center; gap: 5px; padding-left: 5px; }
.zoom input { appearance: none; width: 100px; height: 11px; margin: 0; background: linear-gradient(#444, #444) center / 100% 1px no-repeat; }
.zoom input::-webkit-slider-thumb { appearance: none; width: 4px; height: 11px; background: #333; }

/* Taskbar */
.taskbar { flex: none; display: flex; align-items: center; height: 40px; background: #421c1e; color: #fff; }
.start { width: 48px; height: 40px; justify-content: center; }
.tsearch { display: flex; align-items: center; gap: 11px; width: 288px; height: 39px; padding: 0 3px 0 11px; border: 1px solid #bbb; background: #f2f2f2; color: #333; font-size: 14px; }
.tsearch input { flex: 1; min-width: 0; }
.claro { display: flex; align-items: center; width: 72px; height: 32px; padding-left: 15px; border-radius: 5px; background: #c90c0f; color: #fff; font: 700 14px Lato, sans-serif; }
.claro svg { margin: -8px 0 0 -6px; }
.apps { display: flex; gap: 1px; padding-left: 1px; }
.apps button { position: relative; width: 48px; height: 40px; justify-content: center; }
.run::after { content: ""; position: absolute; left: 4px; right: 4px; bottom: 0; height: 2px; background: #76b9ed; }
.multi::after { background: linear-gradient(90deg, #76b9ed 31px, #5288b0 31px); }
.apps .active { background: #6b4c4e; }
.active::after { left: 0; right: 0; }
.weather { margin-left: auto; gap: 7px; font-size: 13px; }
.weather span { padding-left: 3px; }
.count { font: 600 11px "Open Sans", sans-serif; fill: #fff; }
.tray { display: flex; align-items: center; gap: 8px; margin-left: 24px; }
.clock { margin-left: 10px; font-size: 11px; line-height: 18px; text-align: center; white-space: nowrap; }
.clock + .clock { margin-left: 14px; }
.notes { margin-left: 16px; height: 40px; width: 38px; margin-right: 4px; border-right: 1px solid #8a7577; }
```
